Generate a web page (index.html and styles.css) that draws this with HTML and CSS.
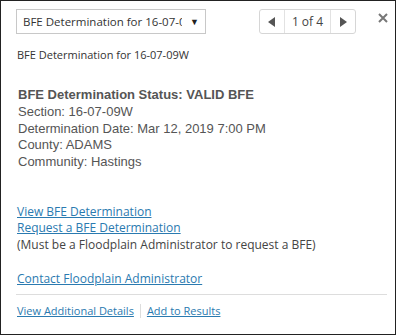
FILE: index.html
```html
<!DOCTYPE html>
<html>
<head>
<meta charset="utf-8">
<link rel="stylesheet" href="styles.css">
</head>
<body>
<div class="popup">
  <div class="header">
    <div class="select">
      <span class="select-text">BFE Determination for 16-07-09W</span>
      <span class="select-arrow">▼</span>
    </div>
    <div class="pager">
      <span class="pg-btn"><svg width="8" height="10" viewBox="0 0 8 10"><path d="M7 0 L0 5 L7 10 Z" fill="#555"/></svg></span>
      <span class="pg-text">1 of 4</span>
      <span class="pg-btn"><svg width="8" height="10" viewBox="0 0 8 10"><path d="M1 0 L8 5 L1 10 Z" fill="#555"/></svg></span>
    </div>
    <span class="close"><svg width="10" height="10" viewBox="0 0 10 10"><path d="M1 1 L9 9 M9 1 L1 9" stroke="#777" stroke-width="2"/></svg></span>
  </div>
  <div class="title">BFE Determination for 16-07-09W</div>
  <div class="info">
    <div class="info-head">BFE Determination Status: VALID BFE</div>
    <div>Section: 16-07-09W</div>
    <div>Determination Date: Mar 12, 2019 7:00 PM</div>
    <div>County: ADAMS</div>
    <div>Community: Hastings</div>
  </div>
  <div class="links">
    <a href="#">View BFE Determination</a>
    <a href="#">Request a BFE Determination</a>
    <span class="note">(Must be a Floodplain Administrator to request a BFE)</span>
  </div>
  <div class="contact"><a href="#">Contact Floodplain Administrator</a></div>
  <div class="footer">
    <a href="#">View Additional Details</a>
    <span class="sep"></span>
    <a href="#">Add to Results</a>
  </div>
</div>
</body>
</html>
```
FILE: styles.css
```css
html, body { margin: 0; padding: 0; background: #fff; }
.popup {
  box-sizing: border-box;
  width: 396px;
  height: 335px;
  border: 1px solid #222;
  padding: 8px 8px 0 15px;
  font-family: "Open Sans", "Segoe UI", sans-serif;
  font-size: 12px;
  color: #333;
}
.header { display: flex; align-items: flex-start; height: 25px; }
.select {
  box-sizing: border-box;
  width: 190px;
  height: 25px;
  border: 1px solid #c8c8c8;
  display: flex;
  align-items: center;
  padding: 0 6px 0 6px;
  font-size: 11.5px;
  color: #333;
}
.select-text { flex: 1; min-width: 0; overflow: hidden; white-space: nowrap; }
.select-arrow { flex: none; font-size: 9px; margin-left: 8px; color: #222; }
.pager {
  box-sizing: border-box;
  margin-left: 53px;
  height: 25px;
  border: 1px solid #d6d6d6;
  border-radius: 3px;
  display: flex;
  align-items: stretch;
}
.pg-btn { width: 24px; display: flex; align-items: center; justify-content: center; }
.pg-text {
  width: 45px; display: flex; align-items: center; justify-content: center;
  border-left: 1px solid #e2e2e2; border-right: 1px solid #e2e2e2;
  font-size: 12px; color: #444;
}
.close { margin-left: 22px; margin-top: 1px; }
.title { margin-top: 12px; line-height: 17px; font-size: 11px; color: #333; padding-left: 1px; }
.info {
  margin-top: 24px;
  font-family: "Liberation Sans", Arial, sans-serif;
  font-size: 13px;
  line-height: 16.75px;
  color: #555;
  padding-left: 2px;
}
.info-head { font-weight: bold; }
.links { margin-top: 33px; display: flex; flex-direction: column; line-height: 16.5px; padding-left: 1px; align-items: flex-start; }
a { color: #2a7ab0; text-decoration: underline; }
.note { color: #444; }
.contact { margin-top: 17px; line-height: 17px; padding-left: 1px; }
.footer {
  margin-top: 7px;
  border-top: 1px solid #ddd;
  padding-top: 8px;
  display: flex;
  align-items: center;
  padding-left: 1px;
  font-size: 11px;
}
.sep { width: 1px; height: 14px; background: #ddd; margin: 0 6px; }
```
